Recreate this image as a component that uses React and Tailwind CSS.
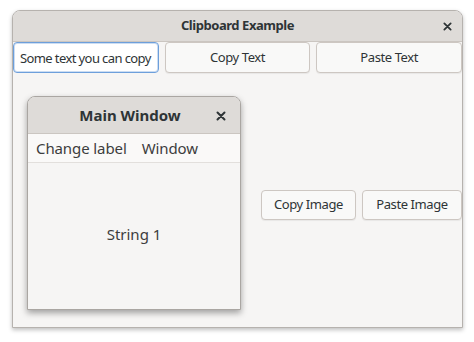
/**
 * Clipboard Example window with nested Main Window
 */

function CloseIcon({ size = 10 }) {
  return (
    <svg width={size} height={size} viewBox="0 0 10 10" className="text-[#2e3436]">
      <path d="M1.5 1.5 L8.5 8.5 M8.5 1.5 L1.5 8.5" stroke="currentColor" strokeWidth="2" strokeLinecap="round" />
    </svg>
  );
}

function Button({ children, className = '' }) {
  return (
    <button className={`h-[30px] rounded-[4px] border border-[#cdc7c2] bg-[#f9f9f8] text-[13px] tracking-[-0.4px] text-[#2e3436] shadow-[0_1px_1px_rgba(0,0,0,0.06)] ${className}`}>
      {children}
    </button>
  );
}

export default function App() {
  return (
    <div className="w-[474px] h-[342px] bg-white pt-[10px] pl-[12px] font-['Noto_Sans',sans-serif]">
      {/* Ventana principal */}
      <div className="w-[451px] h-[318px] flex flex-col rounded-t-[8px] border border-[#b6b2ae] bg-[#f6f5f4] shadow-[0_2px_4px_rgba(0,0,0,0.25)] overflow-hidden">
        {/* Titlebar */}
        <div className="h-[31px] shrink-0 relative flex items-center justify-center bg-[#dedbd8] border-b border-[#cbc6c1]">
          <span className="text-[13px] font-bold tracking-[-0.45px] text-[#2e3436]">Clipboard Example</span>
          <span className="absolute right-[10px] top-[11px]"><CloseIcon size={9} /></span>
        </div>

        {/* Fila de entrada y botones */}
        <div className="grid grid-cols-3 gap-[6px] h-[31px] shrink-0">
          <input
            readOnly
            value="Some text you can copy"
            className="h-[31px] min-w-0 rounded-[4px] border border-[#6d9fdb] bg-white pl-[6px] pr-[2px] text-[13px] tracking-[-0.6px] text-[#2e3436] outline-none shadow-[inset_0_0_0_1px_rgba(109,159,219,0.35)]"
          />
          <Button className="h-[31px]">Copy Text</Button>
          <Button className="h-[31px]">Paste Text</Button>
        </div>

        {/* Cuerpo */}
        <div className="flex flex-1">
          {/* Ventana interna */}
          <div className="ml-[14px] mt-[23px] w-[214px] h-[214px] flex flex-col rounded-t-[8px] border border-[#aaa6a2] bg-[#f6f5f4] shadow-[0_3px_6px_rgba(0,0,0,0.35)] overflow-hidden">
            <div className="h-[37px] shrink-0 relative flex items-center justify-center bg-[#dedbd8] border-b border-[#cbc6c1]">
              <span className="text-[15px] font-bold text-[#2e3436] -ml-[8px]">Main Window</span>
              <span className="absolute right-[14px] top-[14px]"><CloseIcon size={10} /></span>
            </div>
            <div className="h-[29px] shrink-0 flex items-center gap-[15px] px-[8px] bg-[#faf9f8] border-b border-[#e2dfdc] text-[15px] tracking-[-0.1px] text-[#3d3d3d]">
              <span>Change label</span>
              <span>Window</span>
            </div>
            <div className="flex-1 flex items-center justify-center pb-[4px] text-[15px] text-[#3d3d3d]">
              String 1
            </div>
          </div>

          {/* Botones de imagen */}
          <div className="ml-[20px] mt-[117px] flex gap-[6px] h-[30px]">
            <Button className="w-[95px]">Copy Image</Button>
            <Button className="w-[100px]">Paste Image</Button>
          </div>
        </div>
      </div>
    </div>
  );
}
